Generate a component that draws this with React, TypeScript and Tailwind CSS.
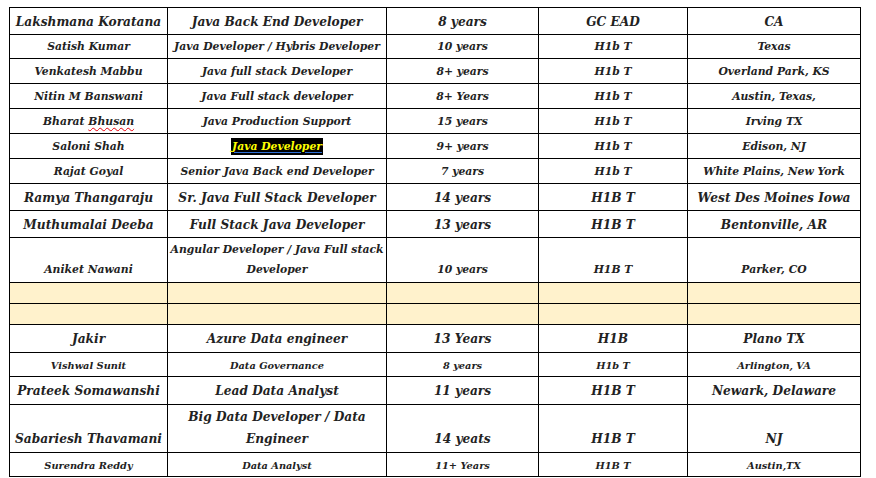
import React from 'react';

type Size = 'lg' | 'md' | 'sm';

type Row = {
  h: string;
  size?: Size;
  cells?: React.ReactNode[];
  tall?: string;
  blank?: boolean;
};

const sizeClass: Record<Size, string> = {
  lg: 'text-[12.2px]',
  md: 'text-[10.8px]',
  sm: 'text-[9.8px]',
};

const rows: Row[] = [
  { h: 'h-[27px]', size: 'lg', cells: ['Lakshmana Koratana', 'Java Back End Developer', '8 years', 'GC EAD', 'CA'] },
  { h: 'h-[24px]', size: 'md', cells: ['Satish Kumar', 'Java Developer / Hybris Developer', '10 years', 'H1b T', 'Texas'] },
  { h: 'h-[25px]', size: 'md', cells: ['Venkatesh Mabbu', 'Java full stack Developer', '8+ years', 'H1b T', 'Overland Park, KS'] },
  { h: 'h-[25px]', size: 'md', cells: ['Nitin M Banswani', 'Java Full stack developer', '8+ Years', 'H1b T', 'Austin, Texas,'] },
  {
    h: 'h-[25px]',
    size: 'md',
    cells: [
      <>
        Bharat <span className="underline decoration-wavy decoration-red-600 decoration-1 underline-offset-2">Bhusan</span>
      </>,
      'Java Production Support',
      '15 years',
      'H1b T',
      'Irving TX',
    ],
  },
  {
    h: 'h-[25px]',
    size: 'md',
    cells: [
      'Saloni Shah',
      <span className="bg-black px-px py-[2px] text-[#ffff00] underline decoration-[#2f6fd6] underline-offset-2">Java Developer</span>,
      '9+ years',
      'H1b T',
      'Edison, NJ',
    ],
  },
  { h: 'h-[25px]', size: 'md', cells: ['Rajat Goyal', 'Senior Java Back end Developer', '7 years', 'H1b T', 'White Plains, New York'] },
  { h: 'h-[27px]', size: 'lg', cells: ['Ramya Thangaraju', 'Sr. Java Full Stack Developer', '14 years', 'H1B T', 'West Des Moines Iowa'] },
  { h: 'h-[27px]', size: 'lg', cells: ['Muthumalai Deeba', 'Full Stack Java Developer', '13 years', 'H1B T', 'Bentonville, AR'] },
  {
    h: 'h-[45px]',
    size: 'md',
    tall: 'leading-[20px]',
    cells: [
      'Aniket Nawani',
      <>
        Angular Developer / Java Full stack
        <br />
        Developer
      </>,
      '10 years',
      'H1B T',
      'Parker, CO',
    ],
  },
  { h: 'h-[21px]', blank: true },
  { h: 'h-[21px]', blank: true },
  { h: 'h-[28px]', size: 'lg', cells: ['Jakir', 'Azure Data engineer', '13 Years', 'H1B', 'Plano TX'] },
  { h: 'h-[24px]', size: 'sm', cells: ['Vishwal Sunit', 'Data Governance', '8 years', 'H1b T', 'Arlington, VA'] },
  { h: 'h-[28px]', size: 'lg', cells: ['Prateek Somawanshi', 'Lead Data Analyst', '11 years', 'H1B T', 'Newark, Delaware'] },
  {
    h: 'h-[48px]',
    size: 'lg',
    tall: 'leading-[22px]',
    cells: [
      'Sabariesh Thavamani',
      <>
        Big Data Developer / Data
        <br />
        Engineer
      </>,
      '14 yeats',
      'H1B T',
      'NJ',
    ],
  },
  { h: 'h-[24px]', size: 'sm', cells: ['Surendra Reddy', 'Data Analyst', '11+ Years', 'H1B T', 'Austin,TX'] },
];

const widths = ['w-[158px]', 'w-[219px]', 'w-[152px]', 'w-[149px]', 'w-[173px]'];

export default function App() {
  return (
    <div className="h-[478px] w-[876px] bg-white pl-[9px] pt-[7px]">
      <table
        className="w-[851px] table-fixed border-collapse text-[#222222] italic font-bold"
        style={{ fontFamily: '"DejaVu Serif", "Liberation Serif", serif' }}
      >
        <colgroup>
          {widths.map((w, i) => (
            <col key={i} className={w} />
          ))}
        </colgroup>
        <tbody>
          {rows.map((r, i) => (
            <tr key={i} className={`${r.h} ${r.blank ? 'bg-[#fff2cc]' : ''}`}>
              {r.blank
                ? widths.map((_, j) => <td key={j} className="border border-black p-0" />)
                : r.cells!.map((c, j) => (
                    <td
                      key={j}
                      className={`border border-black px-0 text-center whitespace-nowrap ${sizeClass[r.size!]} ${
                        r.tall ? `align-bottom pb-[2px] ${r.tall}` : 'align-middle pt-[2px] leading-none'
                      }`}
                    >
                      {c}
                    </td>
                  ))}
            </tr>
          ))}
        </tbody>
      </table>
    </div>
  );
}
